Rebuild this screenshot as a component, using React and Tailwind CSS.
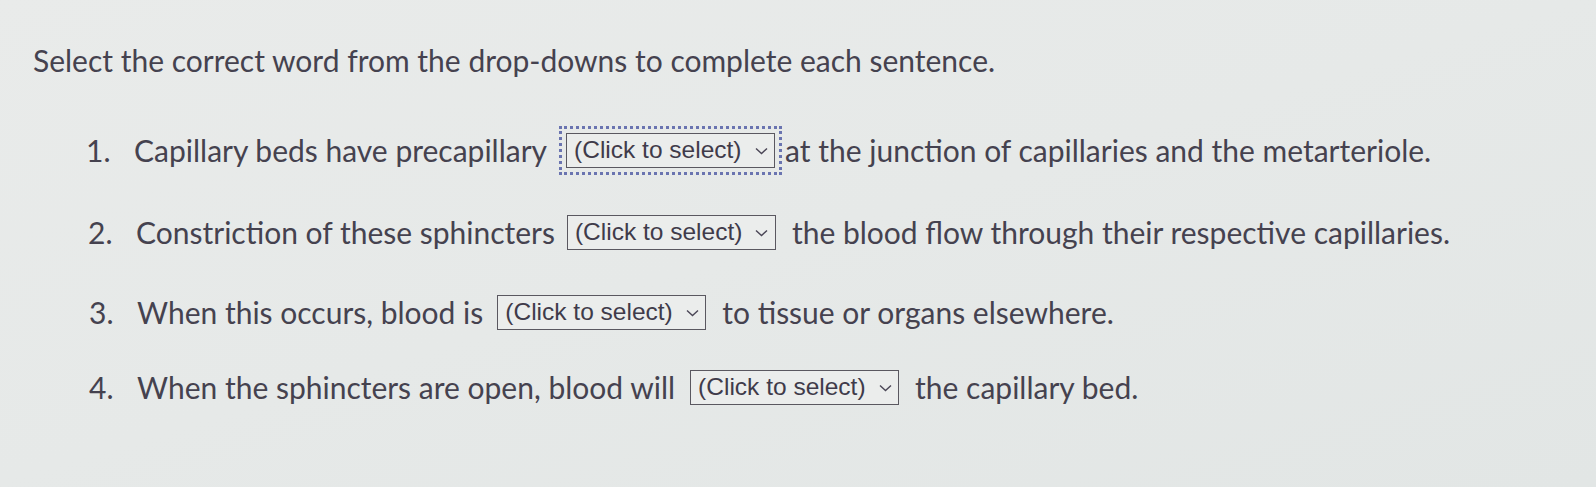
import React from "react";

function Select({ focused }) {
  return (
    <span
      className={
        "inline-flex items-center h-[35px] w-[209px] border-[1.5px] border-[#5a5860] bg-[#ebedec] pl-[7px] gap-[13px] shrink-0 " +
        (focused ? "outline-dotted outline-[3px] outline-[#6a74b0] outline-offset-[4px]" : "")
      }
      style={{ fontFamily: '"Liberation Sans", Arial, sans-serif' }}
    >
      <span className="text-[24.5px] leading-none text-[#3f3b4a] whitespace-nowrap">(Click to select)</span>
      <svg width="13" height="8" viewBox="0 0 13 8" className="mt-[2px]">
        <path d="M1 1.5 L6.5 6.5 L12 1.5" fill="none" stroke="#4a4656" strokeWidth="1.4" />
      </svg>
    </span>
  );
}

function Row({ num, before, after, focused, gapL, gapR, indent }) {
  return (
    <div className={"flex items-center h-[36px] " + indent}>
      <span className="w-[48px] shrink-0">{num}</span>
      <span className="whitespace-nowrap">{before}</span>
      <span className={gapL}></span>
      <Select focused={focused} />
      <span className={gapR}></span>
      <span className="whitespace-nowrap">{after}</span>
    </div>
  );
}

export default function App() {
  return (
    <div
      className="w-[1596px] h-[487px] bg-gradient-to-br from-[#e9ebea] via-[#e6e9e8] to-[#e2e6e5] text-[#45424f] overflow-hidden"
      style={{ fontFamily: "Lato, 'Open Sans', sans-serif" }}
    >
      <div className="pl-[33px] pt-[42px] text-[30px] leading-[36px]">
        Select the correct word from the drop-downs to complete each sentence.
      </div>
      <div className="pl-[86px] pt-[54px] flex flex-col text-[30px]">
        <Row num="1." before="Capillary beds have precapillary" after="at the junction of capillaries and the metarteriole." focused gapL="w-[19px]" gapR="w-[10px]" indent="" />
        <Row num="2." before="Constriction of these sphincters" after="the blood flow through their respective capillaries." gapL="w-[12px]" gapR="w-[16px]" indent="mt-[46px] pl-[2px]" />
        <Row num="3." before="When this occurs, blood is" after="to tissue or organs elsewhere." gapL="w-[14px]" gapR="w-[16px]" indent="mt-[44px] pl-[3px]" />
        <Row num="4." before="When the sphincters are open, blood will" after="the capillary bed." gapL="w-[15px]" gapR="w-[16px]" indent="mt-[39px] pl-[3px]" />
      </div>
    </div>
  );
}
